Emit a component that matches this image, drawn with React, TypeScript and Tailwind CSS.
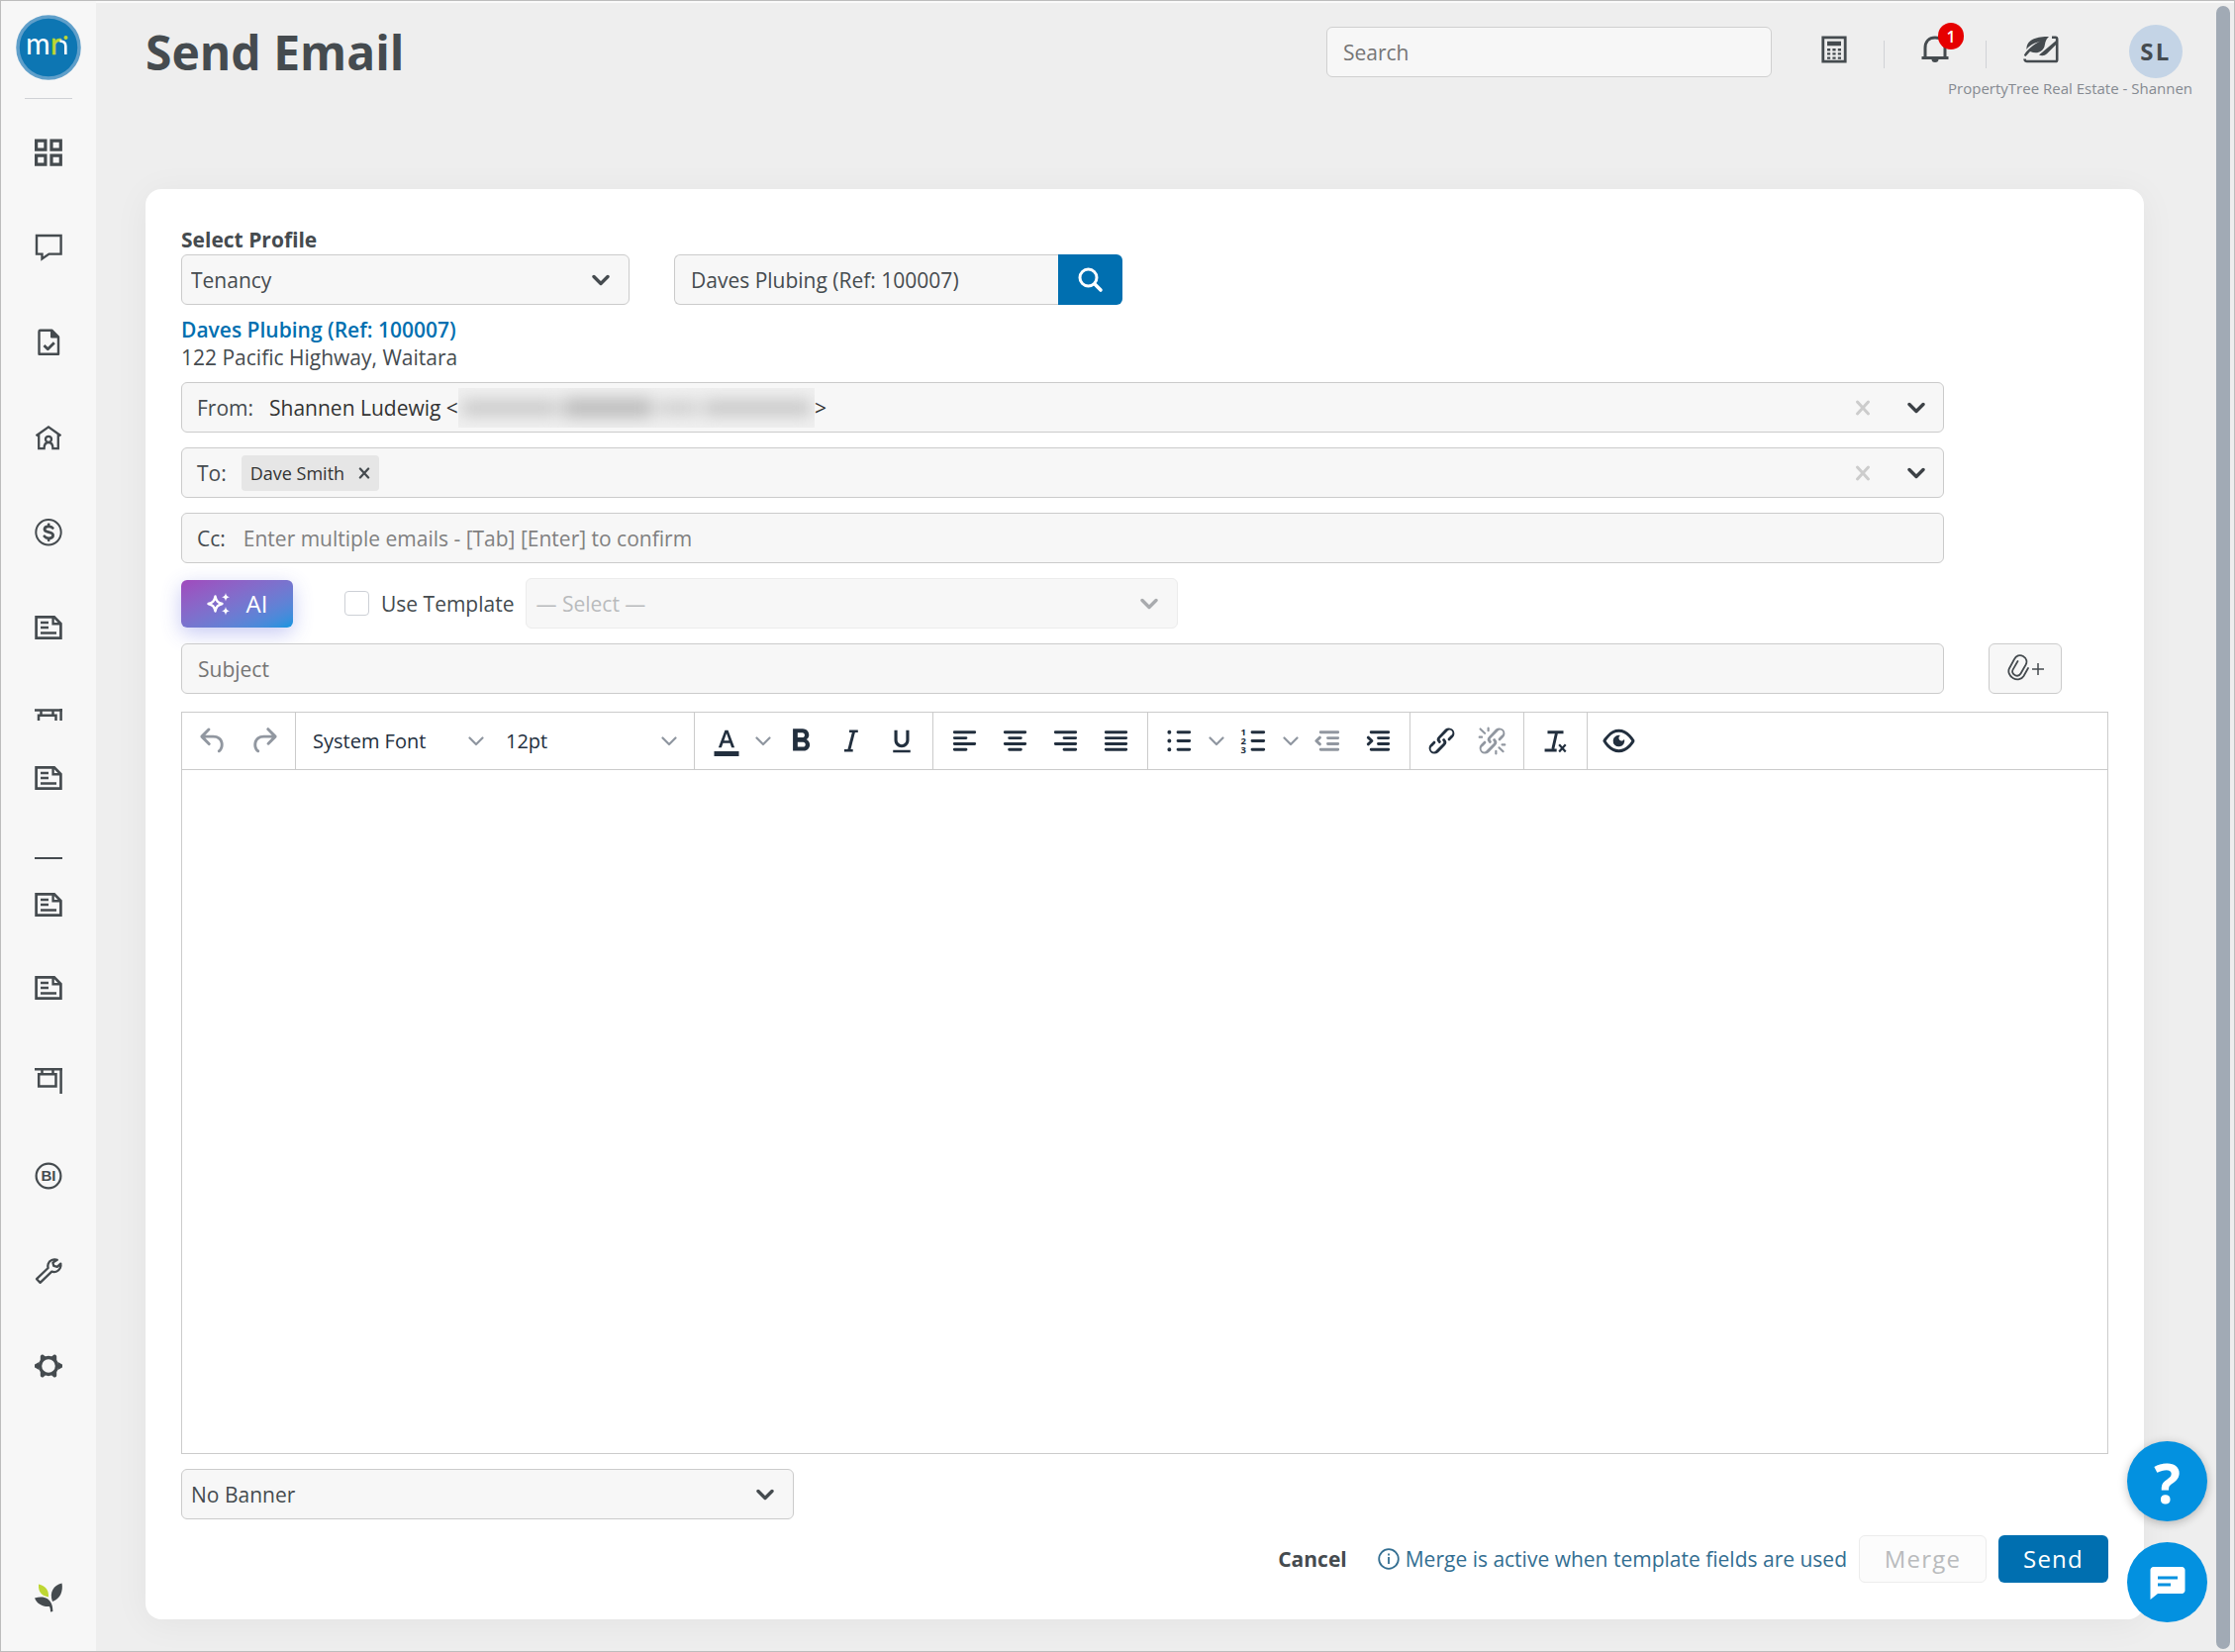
import React, { useState } from 'react';
import { MdFormatBold, MdFormatColorText, MdFormatUnderlined } from 'react-icons/md';

const ChevronIcon = ({ className = '' }: { className?: string }) => (
  <svg viewBox="0 0 18 12" fill="none" stroke="currentColor" strokeWidth="3.4" strokeLinecap="round" strokeLinejoin="round" className={`w-[18px] h-3 ${className}`}>
    <path d="M2 2.500l7 7 7-7" />
  </svg>
);

const ThinChevron = ({ className = '' }: { className?: string }) => (
  <svg viewBox="0 0 16 10" fill="none" stroke="currentColor" strokeWidth="2.2" strokeLinecap="round" strokeLinejoin="round" className={`w-4 h-2.5 text-[#8f96a0] ${className}`}>
    <path d="M1.500 1.500L8 8l6.500-6.500" />
  </svg>
);

const CrossIcon = ({ className = '' }: { className?: string }) => (
  <svg viewBox="0 0 16 16" fill="none" stroke="currentColor" strokeWidth="3" strokeLinecap="round" className={className}>
    <path d="M2.500 2L13.500 14M13.500 2L2.500 14" />
  </svg>
);

/* Sidebar icons */
const GridIcon = () => (
  <svg viewBox="0 0 28 28" fill="none" stroke="currentColor" strokeWidth="3.2" className="w-7 h-7">
    <path d="M1.600 2.100h9.300v9H1.600zM17 2.100h9.300v9H17zM1.600 17.100h9.300v9H1.600zM17 17.100h9.300v9H17z" />
  </svg>
);

const ChatIcon = () => (
  <svg viewBox="0 0 28 28" fill="none" stroke="currentColor" strokeWidth="2.400" className="w-7 h-7">
    <path d="M2 2h24.600v18.600H14.500L7.500 25.500v-4.900H2z" />
  </svg>
);

const FileCheckIcon = () => (
  <svg viewBox="0 0 28 28" fill="none" stroke="currentColor" strokeWidth="2.400" strokeLinejoin="round" className="w-7 h-7">
    <path d="M5.700 1.700h11.600L24 8.400v17.400H4.500V2.900c0-.7.500-1.200 1.200-1.200z" />
    <path d="M16.500 1.700V9H24z" fill="currentColor" strokeWidth="1" />
    <path d="M9.500 17l3.800 3.700 6.500-6.500" strokeWidth="2.800" />
  </svg>
);

const HouseIcon = () => (
  <svg viewBox="0 0 28 28" fill="none" stroke="currentColor" strokeWidth="2.300" className="w-7 h-7">
    <path d="M1.500 12.300L14 3.400l12.500 8.900M4.200 11v14.200h5.400c0-3.700 1.500-6.200 4.400-6.200s4.400 2.500 4.400 6.200h5.400V11" />
    <circle cx="14" cy="15.800" r="3" />
  </svg>
);

const DollarIcon = () => (
  <svg viewBox="0 0 28 28" fill="none" stroke="currentColor" strokeWidth="2" strokeLinecap="round" className="w-7 h-7">
    <circle cx="14" cy="13.700" r="12.700" />
    <path d="M18.300 9.500c-1-1.300-2.500-1.700-4.300-1.700-2.400 0-4 1.100-4 2.900 0 4 8.600 2 8.600 6.100 0 2-1.900 3-4.300 3-2 0-3.500-.6-4.500-2M14.200 5.800v2M14.200 19.800v2" strokeWidth="2.800" />
  </svg>
);

const NewsIcon = () => (
  <svg viewBox="0 0 28 28" fill="none" stroke="currentColor" strokeWidth="2.700" className="w-7 h-7">
    <path d="M1.600 3.300h18.200l6.600 6.700v14.700H1.600z" />
    <path d="M18.600 3.300v7h7.800" strokeWidth="2.400" />
    <path d="M6 9h8M6 14h8M6 19.500h16" strokeWidth="2.500" />
  </svg>
);

const TableIcon = () => (
  <svg viewBox="0 0 28 12" fill="none" stroke="currentColor" strokeWidth="2.500" className="w-7 h-3">
    <path d="M0 1.500h28M26.600 0v12M6.500 1.500v5M18.500 1.500v5M4 12V6.800h17.500V12" />
  </svg>
);

const SignIcon = () => (
  <svg viewBox="0 0 28 28" fill="none" stroke="currentColor" strokeWidth="2.500" className="w-7 h-7">
    <path d="M0 2.200h28M26.600 1v26M7.500 2v5M18.500 2v5M4.200 7.300h17.300v12.200H4.200z" />
  </svg>
);

const BiIcon = () => (
  <svg viewBox="0 0 28 28" className="w-7 h-7">
    <circle cx="14" cy="14" r="12.400" fill="none" stroke="currentColor" strokeWidth="2.200" />
    <text x="14" y="19.300" textAnchor="middle" fontSize="15" fontWeight="700" fill="currentColor" fontFamily="Liberation Sans, sans-serif">BI</text>
  </svg>
);

const WrenchIcon = () => (
  <svg viewBox="0 0 28 28" fill="none" stroke="currentColor" strokeWidth="2.300" strokeLinejoin="round" className="w-7 h-7">
    <path d="M22.800 2.800c-3.700-1.300-7.900.6-9.100 4.100-.5 1.400-.5 2.800-.1 4.100L2 22.200l3.600 3.700L17.300 14.700c3.300 1 7-.5 8.500-3.600.7-1.500.8-3 .5-4.500l-3.500 3.200-3.500-.9-.9-3.300z" />
  </svg>
);

const GearIcon = () => (
  <svg viewBox="0 0 28 28" className="w-7 h-7">
    <circle cx="14" cy="14" r="8.500" fill="none" stroke="currentColor" strokeWidth="3.400" />
    <path fill="currentColor" d="M4.500 10v8L1 16a2.200 2.200 0 0 1 0-4zM23.500 10v8l3.500-2a2.200 2.200 0 0 0 0-4zM5.800 9.500l6-4-3-2.800a2 2 0 0 0-3 1.500zM22.200 9.500l-6-4 3-2.800a2 2 0 0 1 3 1.500zM5.800 18.500l6 4-3 2.800a2 2 0 0 1-3-1.500zM22.200 18.500l-6 4 3 2.800a2 2 0 0 0 3-1.500z" />
  </svg>
);

const SproutIcon = () => (
  <svg viewBox="0 0 29 30" className="w-[29px] h-[30px]">
    <path fill="#bed733" d="M4 1.500c7 1.500 10.500 6 10 13C6.500 13 3.500 9 4 1.500z" />
    <path fill="#454b4f" d="M27.500.5c1.500 8-1.500 15.500-9.500 18.500C14.500 10 19 2.500 27.500.5z" />
    <path fill="#454b4f" d="M0 15.500c8-2.500 15-.5 17.300 6.500.7 1.800.9 4 1.100 7l-2.400.6c0-2.600-.4-4.200-1.100-5.600C8 24.500 2.500 21.500 0 15.500z" />
  </svg>
);

const LineIcon = () => <div className="w-7 h-0.5 bg-[#454b4f]" />;

const navItems = [
  { label: 'Dashboard', icon: GridIcon, gap: '' },
  { label: 'Messages', icon: ChatIcon, gap: 'mt-[68px]' },
  { label: 'Tasks', icon: FileCheckIcon, gap: 'mt-[68px]' },
  { label: 'Properties', icon: HouseIcon, gap: 'mt-[68px]' },
  { label: 'Accounting', icon: DollarIcon, gap: 'mt-[68px]' },
  { label: 'Reports', icon: NewsIcon, gap: 'mt-[68px]' },
  { label: 'Inspections', icon: TableIcon, gap: 'mt-[68px]' },
  { label: 'Statements', icon: NewsIcon, gap: 'mt-11' },
  { label: 'Sales', icon: LineIcon, gap: 'mt-[66px]' },
  { label: 'Letters', icon: NewsIcon, gap: 'mt-8' },
  { label: 'News', icon: NewsIcon, gap: 'mt-14' },
  { label: 'Listings', icon: SignIcon, gap: 'mt-[66px]' },
  { label: 'Insights', icon: BiIcon, gap: 'mt-[68px]' },
  { label: 'Maintenance', icon: WrenchIcon, gap: 'mt-[68px]' },
  { label: 'Settings', icon: GearIcon, gap: 'mt-[68px]' },
];

const Logo = () => (
  <svg viewBox="0 0 66 66" className="w-[66px] h-[66px]" fontFamily="Lato, sans-serif" fontSize="30">
    <circle cx="33" cy="33" r="31" fill="#0d76b3" stroke="#5f9fca" strokeWidth="3.500" />
    <text x="10" y="40" fill="#fff">m</text>
    <text x="35" y="40" fill="#bed733" stroke="#bed733" strokeWidth="0.500">r</text>
    <path d="M44.500 26.500c3.500 0 5.800 1.500 5.800 5V40" fill="none" stroke="#fff" strokeWidth="2.600" />
    <circle cx="50.500" cy="23" r="2" fill="#bed733" />
  </svg>
);

const Sidebar = () => (
  <aside className="flex w-24 shrink-0 flex-col items-center bg-[#f7f7f7] pt-3.5 pb-[39px] text-[#454b4f]">
    <a href="#home" aria-label="Home"><Logo /></a>
    <div className="mt-[18px] mb-10 h-px w-12 bg-[#d0d2d6]" />
    <nav className="flex flex-1 flex-col items-center">
      {navItems.map(({ label, icon: Icon, gap }) => (
        <a key={label} href="#" aria-label={label} className={`block ${gap}`}>
          <Icon />
        </a>
      ))}
    </nav>
    <SproutIcon />
  </aside>
);

const Header = () => (
  <header className="flex items-start pl-[50px] pr-[42px] pt-[22px]">
    <h1 className="flex-1 text-5xl leading-14 font-bold text-[#454b4f]">Send Email</h1>
    <input
      type="search"
      aria-label="Search"
      placeholder="Search"
      className="mt-0.5 h-[51px] w-[450px] rounded-md border border-[#d0d0d0] bg-[#f7f7f7] px-4 placeholder:text-[#757575]"
    />
    <div className="ml-[50px] flex flex-col items-end">
      <div className="flex items-start text-[#454b4f]">
        <button aria-label="Calculator" className="mt-[11px]">
          <svg viewBox="0 0 26 28" className="w-[26px] h-7">
            <path d="M1.800 1.800h22.400v24.400H1.800z" fill="none" stroke="currentColor" strokeWidth="2.800" />
            <path fill="currentColor" d="M6 5.800h14v4.400H6zM6 13h3.200v2.400H6zM11.400 13h3.200v2.400h-3.200zM16.800 13H20v2.400h-3.200zM6 17.200h3.200v2.400H6zM11.400 17.200h3.200v2.400h-3.200zM16.800 17.200H20v2.400h-3.200zM6 21.400h3.200v2.400H6zM11.400 21.400h3.200v2.400h-3.200zM16.800 21.400H20v2.400h-3.200z" />
          </svg>
        </button>
        <div className="mx-[37px] mt-4 h-7 w-px bg-[#d0d2d6]" />
        <button aria-label="Notifications" className="relative mt-[11px]">
          <svg viewBox="0 0 28 28" className="w-7 h-7">
            <path d="M4 22V12.500C4 6 8 2 14 2s10 4 10 10.500V22" fill="none" stroke="currentColor" strokeWidth="3" />
            <path d="M.5 21h27v3h-10a3.500 3 0 0 1-7 0H.5z" fill="currentColor" />
          </svg>
          <span className="absolute -top-[13px] left-[17px] flex h-[27px] w-[26px] items-center justify-center rounded-full bg-[#e60000] text-base font-semibold text-white">1</span>
        </button>
        <div className="mx-[37px] mt-4 h-7 w-px bg-[#d0d2d6]" />
        <button aria-label="Sign documents" className="mt-[11px]">
          <svg viewBox="0 0 36 28" className="w-9 h-7">
            <path d="M29 1.800h3.600c1 0 1.600.6 1.600 1.600v21c0 1-.6 1.600-1.600 1.600H4c-1.600 0-2.500-1-2.500-2.600" fill="none" stroke="currentColor" strokeWidth="2.600" />
            <path d="M26 1C14 .5 3 4 3.500 14c2-4 9-7 14-8.500C11 8.500 3 15 .8 20l1.700 1L7 16c7 3 12.500.5 14.500-5C22.500 7 22.500 4 26 1z" fill="currentColor" />
            <path d="M16 19.500c3 1.300 6 .6 8-1.300l11-11V3.500z" fill="currentColor" />
          </svg>
        </button>
        <button aria-label="Account" className="ml-[71px] mr-2.5 flex h-[54px] w-[54px] items-center justify-center rounded-full bg-[#c4d4e6] text-2xl font-bold tracking-widest">
          SL
        </button>
      </div>
      <div className="text-[15px] leading-5 text-[#858a91]">PropertyTree Real Estate - Shannen</div>
    </div>
  </header>
);

const inputBox = 'h-[51px] rounded-md border border-[#cbcbcb] bg-[#f7f7f7]';

const ToolGroup = ({ children }: { children: React.ReactNode }) => (
  <div className="flex h-[57px] items-center border-r border-[#cbcbcb] px-1.5 last:border-r-0">{children}</div>
);

const Tool = ({ label, disabled = false, children }: { label: string; disabled?: boolean; children: React.ReactNode }) => (
  <button aria-label={label} disabled={disabled} className="flex h-12 w-[51px] items-center justify-center disabled:text-[#9197a0]">
    {children}
  </button>
);

const SplitTool = ({ label, children }: { label: string; children: React.ReactNode }) => (
  <div className="flex w-[75px] items-center">
    <Tool label={label}>{children}</Tool>
    <button aria-label={`${label} options`} className="flex h-12 w-6 items-center justify-center"><ThinChevron /></button>
  </div>
);

const Glyph = ({ d }: { d: string }) => (
  <svg viewBox="0 0 24 24" fill="currentColor" className="w-[35px] h-[35px]"><path d={d} /></svg>
);

const Lines = ({ d, children }: { d: string; children?: React.ReactNode }) => (
  <svg viewBox="0 0 24 24" fill="none" stroke="currentColor" strokeWidth="2" strokeLinecap="round" className="w-[35px] h-[35px]">
    <path d={d} />
    {children}
  </svg>
);

const LINK = 'M6.200 12.300a1 1 0 0 1 1.400 1.400l-2 2a2 2 0 1 0 2.600 2.800l4.800-4.800a1 1 0 0 0 0-1.400 1 1 0 1 1 1.400-1.300 2.900 2.900 0 0 1 0 4L9.600 20a3.900 3.900 0 0 1-5.500-5.500l2-2Zm11.600-.6a1 1 0 0 1-1.400-1.400l2-2a2 2 0 1 0-2.600-2.800L11 10.300a1 1 0 0 0 0 1.400A1 1 0 1 1 9.600 13a2.900 2.900 0 0 1 0-4L14.400 4a3.900 3.900 0 0 1 5.500 5.500l-2 2Z';

const Toolbar = () => (
  <div className="flex border-b border-[#cbcbcb] text-[#222f3e]">
    <ToolGroup>
      <Tool label="Undo" disabled>
        <Glyph d="M6.400 8H12c3.700 0 6.200 2 6.800 5.100.6 2.700-.4 5.600-2.300 6.800a1 1 0 0 1-1-1.800c1.100-.6 1.800-2.700 1.400-4.600-.5-2.100-2.100-3.500-4.900-3.500H6.400l3.300 3.300a1 1 0 1 1-1.400 1.400l-5-5a1 1 0 0 1 0-1.400l5-5a1 1 0 0 1 1.400 1.400L6.400 8Z" />
      </Tool>
      <Tool label="Redo" disabled>
        <Glyph d="M17.600 10H12c-2.800 0-4.400 1.400-4.900 3.500-.4 2 .3 4 1.400 4.600a1 1 0 1 1-1 1.800c-2-1.200-2.900-4.100-2.300-6.800.6-3 3-5.100 6.800-5.100h5.600l-3.300-3.300a1 1 0 1 1 1.400-1.400l5 5a1 1 0 0 1 0 1.400l-5 5a1 1 0 0 1-1.400-1.400l3.300-3.300Z" />
      </Tool>
    </ToolGroup>
    <ToolGroup>
      <div className="relative">
        <select aria-label="Font" className="h-12 w-[195px] appearance-none pl-[11px] text-xl"><option>System Font</option></select>
        <ThinChevron className="pointer-events-none absolute right-[11px] top-[19px]" />
      </div>
      <div className="relative">
        <select aria-label="Font size" className="h-12 w-[195px] appearance-none pl-[11px] text-xl"><option>12pt</option></select>
        <ThinChevron className="pointer-events-none absolute right-[11px] top-[19px]" />
      </div>
    </ToolGroup>
    <ToolGroup>
      <SplitTool label="Text color"><MdFormatColorText className="h-[30px] w-[30px]" /></SplitTool>
      <Tool label="Bold"><MdFormatBold className="h-[38px] w-[38px]" /></Tool>
      <Tool label="Italic">
        <svg viewBox="0 0 24 24" fill="none" stroke="currentColor" strokeWidth="1.600" className="w-[35px] h-[35px]">
          <path d="M11 5.300h6M7.500 18.700h6" />
          <path d="M14.200 5.300l-3.500 13.400" strokeWidth="2" />
        </svg>
      </Tool>
      <Tool label="Underline"><MdFormatUnderlined className="h-[30px] w-[30px]" /></Tool>
    </ToolGroup>
    <ToolGroup>
      <Tool label="Align left"><Lines d="M5 6h14M5 10h8M5 14h14M5 18h8" /></Tool>
      <Tool label="Align center"><Lines d="M5 6h14M8 10h8M5 14h14M8 18h8" /></Tool>
      <Tool label="Align right"><Lines d="M5 6h14M11 10h8M5 14h14M11 18h8" /></Tool>
      <Tool label="Justify"><Lines d="M5 6h14M5 10h14M5 14h14M5 18h14" /></Tool>
    </ToolGroup>
    <ToolGroup>
      <SplitTool label="Bullet list">
        <Lines d="M11 6h8M11 12h8M11 18h8"><path d="M5 6h.1M5 12h.1M5 18h.1" strokeWidth="2.600" /></Lines>
      </SplitTool>
      <SplitTool label="Numbered list">
        <Lines d="M11 6h8M11 12h8M11 18h8">
          <g stroke="none" fill="currentColor" fontSize="6.500" fontWeight="700" textAnchor="middle">
            <text x="5" y="8">1</text>
            <text x="5" y="14.300">2</text>
            <text x="5" y="20.500">3</text>
          </g>
        </Lines>
      </SplitTool>
      <Tool label="Decrease indent" disabled><Lines d="M7 6h12M12 10h7M12 14h7M7 18h12"><path d="M6.500 9.700L4 12l2.500 2.300" strokeLinejoin="round" /></Lines></Tool>
      <Tool label="Increase indent"><Lines d="M7 6h12M12 10h7M12 14h7M7 18h12"><path d="M5 9.700L7.500 12 5 14.300" strokeLinejoin="round" /></Lines></Tool>
    </ToolGroup>
    <ToolGroup>
      <Tool label="Insert link"><Glyph d={LINK} /></Tool>
      <Tool label="Remove link" disabled>
        <Glyph d={LINK + 'M7.600 6.300a.8.8 0 0 1-1 1.100L3.300 4.200a.7.7 0 1 1 1-1l3.200 3.100ZM5.100 8.600a.8.8 0 0 1 0 1.500H3a.8.8 0 0 1 0-1.500H5Zm5-3.500a.8.8 0 0 1-1.500 0V3a.8.8 0 0 1 1.500 0V5Zm6 11.800a.8.8 0 0 1 1-1l3.200 3.200a.8.8 0 0 1-1 1L16 17Zm-2.200 2a.8.8 0 0 1 1.500 0V21a.8.8 0 0 1-1.500 0V19Zm5-3.500a.7.7 0 1 1 0-1.500H21a.8.8 0 0 1 0 1.500H19Z'} />
      </Tool>
    </ToolGroup>
    <ToolGroup>
      <Tool label="Clear formatting">
        <svg viewBox="0 0 24 24" fill="none" stroke="currentColor" strokeWidth="2" className="w-[35px] h-[35px]">
          <path d="M6.500 6h11M12.800 6l-2.600 11.500M4.500 18.500h8.300" />
          <path d="M14.500 14.500l4.500 5M19 14.500l-4.500 5" strokeWidth="1.500" />
        </svg>
      </Tool>
    </ToolGroup>
    <ToolGroup>
      <Tool label="Preview">
        <Glyph d="M3.500 12.500c.5.800 1.100 1.600 1.800 2.300 2 2 4.200 3.200 6.700 3.200s4.700-1.200 6.700-3.200a16.200 16.200 0 0 0 2.100-2.800 15.700 15.700 0 0 0-2.100-2.800c-2-2-4.200-3.200-6.700-3.200a9.300 9.300 0 0 0-6.700 3.200A16.200 16.200 0 0 0 3.200 12c0 .2.200.3.300.5Zm-2.400-1 .7-1.200L4 7.800C6.200 5.400 8.900 4 12 4c3 0 5.800 1.400 8.100 3.800a18.200 18.200 0 0 1 2.800 3.700v1l-.7 1.200-2.100 2.500c-2.300 2.400-5 3.800-8.100 3.800-3 0-5.800-1.400-8.100-3.800a18.200 18.200 0 0 1-2.800-3.700 1 1 0 0 1 0-1Zm12-3.300a2 2 0 1 0 2.700 2.600 4 4 0 1 1-2.600-2.600Z" />
      </Tool>
    </ToolGroup>
  </div>
);

const FieldControls = ({ name }: { name: string }) => (
  <div className="ml-auto flex items-center gap-[37px]">
    <button aria-label={`Clear ${name}`} className="text-[#cccccc]"><CrossIcon className="h-[18px] w-4" /></button>
    <button aria-label={`Open ${name} list`} className="text-[#3c4146]"><ChevronIcon /></button>
  </div>
);

const App = () => {
  const [useTemplate, setUseTemplate] = useState(false);

  return (
    <div className="flex min-h-screen border border-[#bdbdbd] bg-[#eeeeee] font-['Open_Sans',sans-serif] text-[21px] leading-7 text-[#454b4f]">
      <Sidebar />

      <div className="flex min-w-0 flex-1 flex-col border-t-2 border-[#fafafa]">
        <Header />

        <main className="mt-[92px] mb-8 ml-[50px] mr-[91px] flex flex-1 flex-col rounded-2xl bg-white px-9 pt-9 pb-[37px] shadow-[0_4px_36px_rgba(0,0,0,0.05)]">
          {/* Profile */}
          <label htmlFor="profile" className="leading-[30px] font-bold">Select Profile</label>
          <div className="flex gap-[45px]">
            <div className="relative">
              <select id="profile" className={`${inputBox} w-[453px] appearance-none pl-[9px]`}>
                <option>Tenancy</option>
              </select>
              <ChevronIcon className="pointer-events-none absolute right-5 top-5" />
            </div>
            <div className="flex w-[453px]">
              <input aria-label="Profile reference" defaultValue="Daves Plubing (Ref: 100007)" className="h-[51px] min-w-0 flex-1 rounded-l-md border border-r-0 border-[#cbcbcb] bg-[#f7f7f7] px-4" />
              <button aria-label="Find profile" className="flex w-[65px] items-center justify-center rounded-r-md bg-[#006fb0] text-white">
                <svg viewBox="0 0 26 26" fill="none" stroke="currentColor" strokeWidth="3" strokeLinecap="round" className="h-[26px] w-[26px]">
                  <circle cx="10.500" cy="10.500" r="8.500" />
                  <path d="M17 17l6 6" strokeWidth="3.600" />
                </svg>
              </button>
            </div>
          </div>
          <div className="py-[11px]">
            <a href="#profile" className="block font-semibold text-[#006fb0]">Daves Plubing (Ref: 100007)</a>
            <div>122 Pacific Highway, Waitara</div>
          </div>

          {/* Recipients */}
          <div className="mr-[166px] flex flex-col gap-[15px]">
            <div className={`${inputBox} flex items-center pl-[15px] pr-[18px]`}>
              <span>From:</span>
              <span className="ml-4 text-[#333333]">Shannen Ludewig &lt;</span>
              <span aria-hidden="true" className="flex h-10 w-[360px] items-center overflow-hidden bg-[#f0f0f0]">
                <span className="flex w-full items-center gap-1.5 px-1 blur-[8px]">
                  <span className="h-4 w-[96px] bg-[#c8c8c8]" />
                  <span className="h-5 w-[90px] bg-[#bcbcbc]" />
                  <span className="h-3.5 w-[40px] bg-[#cccccc]" />
                  <span className="h-4 flex-1 bg-[#c6c6c6]" />
                </span>
              </span>
              <span className="text-[#333333]">&gt;</span>
              <FieldControls name="from" />
            </div>
            <div className={`${inputBox} flex items-center pl-[15px] pr-[18px]`}>
              <span>To:</span>
              <span className="ml-[15px] flex h-9 items-center gap-3.5 rounded-sm bg-[#e6e6e6] px-[9px] text-lg text-[#333333]">
                Dave Smith
                <button aria-label="Remove Dave Smith" className="text-[#454b4f]"><CrossIcon className="h-3 w-3" /></button>
              </span>
              <FieldControls name="to" />
            </div>
            <div className={`${inputBox} flex items-center pl-[15px]`}>
              <label htmlFor="cc">Cc:</label>
              <input id="cc" placeholder="Enter multiple emails - [Tab] [Enter] to confirm" className="ml-[18px] flex-1 bg-transparent placeholder:text-[#808080]" />
            </div>
          </div>

          {/* Template */}
          <div className="my-[15px] flex items-center">
            <button className="flex h-12 w-[113px] items-center justify-center gap-4 rounded-md bg-linear-to-br from-[#a049bd] to-[#0095e0] text-2xl text-white shadow-[0_6px_20px_rgba(70,80,220,0.3)]">
              <svg viewBox="0 0 24 24" className="h-6 w-6">
                <path d="M8.500 4.500c1 4.800 2.500 6.300 7 7.500-4.500 1.200-6 2.700-7 7.500-1-4.800-2.500-6.300-7-7.500 4.500-1.200 6-2.700 7-7.500z" fill="none" stroke="currentColor" strokeWidth="2.400" strokeLinejoin="round" />
                <path fill="currentColor" d="M19 1c.5 2.800 1.400 3.700 4 4.200-2.600.5-3.500 1.400-4 4.200-.5-2.800-1.400-3.700-4-4.200 2.600-.5 3.500-1.400 4-4.200zM19 15c.5 2.800 1.400 3.700 4 4.200-2.600.5-3.500 1.400-4 4.200-.5-2.800-1.400-3.700-4-4.200 2.600-.5 3.500-1.400 4-4.200z" />
              </svg>
              AI
            </button>
            <input
              id="use-template"
              type="checkbox"
              checked={useTemplate}
              onChange={(e) => setUseTemplate(e.target.checked)}
              className="ml-[52px] h-[25px] w-[25px] appearance-none rounded-sm border border-[#cdd0d6] bg-white checked:bg-[#006fb0]"
            />
            <label htmlFor="use-template" className="ml-3">Use Template</label>
            <div className="relative ml-3">
              <select aria-label="Template" disabled={!useTemplate} className="h-[51px] w-[659px] appearance-none rounded-md border border-[#ececec] bg-[#f7f7f7] pl-[9px] text-[#b9bbbd]">
                <option>— Select —</option>
              </select>
              <ChevronIcon className="pointer-events-none absolute right-5 top-5 text-[#a9abae]" />
            </div>
          </div>

          <div className="mr-[47px] flex gap-[45px]">
            <input aria-label="Subject" placeholder="Subject" className={`${inputBox} flex-1 px-4 placeholder:text-[#757575]`} />
            <button aria-label="Add attachment" className={`${inputBox} flex w-[74px] items-center justify-center gap-0.5`}>
              <svg viewBox="0 0 24 28" fill="none" stroke="currentColor" strokeWidth="1.800" strokeLinecap="round" className="-mt-1 h-7 w-6">
                <path d="M22 15l-4.500 8c-2 3.300-6.500 4.500-10.500 2.300S1.300 18.500 3 15.200L8 6c1.800-3.500 5.500-5 9-3s4.300 5.500 2.500 8.800l-5 8.700c-1.200 2-3.700 2.700-6 1.500s-3-3.500-1.800-5.600L11.500 8" />
              </svg>
              <svg viewBox="0 0 12 12" stroke="currentColor" strokeWidth="1.500" className="h-3 w-3"><path d="M6 0v12M0 6h12" /></svg>
            </button>
          </div>

          {/* Editor */}
          <div className="mt-[18px] flex min-h-[400px] flex-1 flex-col border border-[#cbcbcb]">
            <Toolbar />
            <textarea aria-label="Message" className="flex-1 resize-none p-4 outline-none" />
          </div>

          <div className="relative mt-[15px] w-[619px]">
            <select aria-label="Banner" className={`${inputBox} w-full appearance-none pl-[9px]`}>
              <option>No Banner</option>
            </select>
            <ChevronIcon className="pointer-events-none absolute right-5 top-5" />
          </div>

          {/* Actions */}
          <div className="mt-4 flex h-12 items-center justify-end">
            <button className="font-bold">Cancel</button>
            <div className="ml-[31px] flex items-center gap-1.5 text-[#336e91]">
              <svg viewBox="0 0 22 22" fill="none" stroke="currentColor" strokeWidth="1.800" className="h-[22px] w-[22px]">
                <circle cx="11" cy="11" r="9.800" />
                <path d="M11 9v7M11 5.500v2" />
              </svg>
              Merge is active when template fields are used
            </div>
            <button disabled className="ml-3 h-12 w-[129px] rounded-md border border-[#ececec] bg-[#fcfcfc] text-2xl tracking-wider text-[#b9bbbd]">Merge</button>
            <button className="ml-3 h-12 w-[111px] rounded-md bg-[#006fb0] text-2xl tracking-wider text-white">Send</button>
          </div>
        </main>
      </div>

      {/* Scrollbar thumb */}
      <div className="fixed top-1.5 right-[5px] bottom-[3px] w-3.5 rounded-full bg-[#a1aab5]" />

      {/* Floating help buttons */}
      <div className="fixed right-7 bottom-[30px] flex flex-col gap-[21px] text-white">
        <button aria-label="Help" className="flex h-[81px] w-[81px] items-center justify-center rounded-full bg-[#0391e0] text-[56px] font-bold shadow-[0_2px_10px_rgba(0,0,0,0.25)]">?</button>
        <button aria-label="Chat" className="flex h-[81px] w-[81px] items-center justify-center rounded-full bg-[#0391e0]">
          <svg viewBox="0 0 36 34" className="h-[34px] w-9">
            <path fill="currentColor" d="M3.500 1h29C34 1 35.500 2.500 35.500 4v21c0 1.500-1.500 3-3 3H8L.5 34V4c0-1.500 1.500-3 3-3z" />
            <path d="M8 12h20M8 19h13" stroke="#0391e0" strokeWidth="3.200" />
          </svg>
        </button>
      </div>
    </div>
  );
};

export default App;
